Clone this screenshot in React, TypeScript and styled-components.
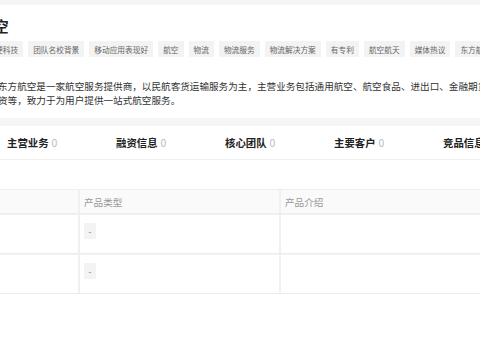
import styled, { createGlobalStyle } from "styled-components";

const GlobalStyle = createGlobalStyle`
  html, body {
    margin: 0;
    padding: 0;
    overflow: hidden;
    background: #f5f5f5;
    font-family: "Noto Sans CJK SC", "Noto Sans", sans-serif;
  }
`;

// the page is scrolled a little to the right, so the content begins off-screen
const Page = styled.div`
  margin-left: -50px;
  width: 760px;
  padding-top: 5px;
  display: flex;
  flex-direction: column;
  gap: 8px;
`;

const Card = styled.div`
  background: #fff;
  display: flex;
  flex-direction: column;
`;

const InfoCard = styled(Card)`
  padding: 11px 0 11px;
`;

const Title = styled.h1`
  margin: 0;
  padding-left: 1px;
  font-size: 14.4px;
  line-height: 20px;
  font-weight: bold;
  color: #222;
`;

const TagRow = styled.div`
  display: flex;
  gap: 5px;
  margin-top: 5px;
  padding-left: 2px;
  white-space: nowrap;
`;

const Tag = styled.span`
  display: inline-flex;
  align-items: center;
  height: 16px;
  padding: 0 5px;
  background: #f3f3f3;
  color: #666;
  font-size: 7.7px;
  border-radius: 1px;
`;

const Description = styled.p`
  margin: 22px 0 0;
  font-size: 9.6px;
  line-height: 14px;
  color: #333;
  white-space: nowrap;
`;

const TabBar = styled.div`
  display: grid;
  grid-template-columns: repeat(5, 109px);
  align-items: center;
  height: 33px;
  padding-left: 57px;
  border-bottom: 1px solid #f0f0f0;
`;

const Tab = styled.div`
  font-size: 10.4px;
  font-weight: bold;
  color: #222;
  white-space: nowrap;
`;

const Count = styled.span`
  margin-left: 3px;
  font-weight: normal;
  color: #bbb;
`;

const Table = styled.div`
  margin-top: 29px;
  border-top: 1px solid #eeeeee;
`;

const Row = styled.div<{ $head?: boolean }>`
  display: grid;
  grid-template-columns: 128px 201px 1fr;
  height: ${(p) => (p.$head ? "23px" : "38px")};
  background: ${(p) => (p.$head ? "#fafafa" : "#fff")};
  border-bottom: 1px solid #ececec;
  & + & {
    border-top: ${(p) => (p.$head ? "none" : "1px solid #f3f3f3")};
  }
`;

const Cell = styled.div<{ $head?: boolean }>`
  padding: ${(p) => (p.$head ? "0 4px" : "8px 4px")};
  display: flex;
  align-items: ${(p) => (p.$head ? "center" : "flex-start")};
  font-size: 9.6px;
  color: #999;
  & + & {
    border-left: 2px solid #f0f0f0;
  }
`;

const Dash = styled.span`
  display: inline-flex;
  align-items: center;
  justify-content: center;
  width: 12px;
  height: 16px;
  background: #f3f3f3;
  color: #666;
  font-size: 8px;
`;

const Filler = styled.div`
  height: 80px;
`;

const tags = [
  "独角兽",
  "硬科技",
  "团队名校背景",
  "移动应用表现好",
  "航空",
  "物流",
  "物流服务",
  "物流解决方案",
  "有专利",
  "航空航天",
  "媒体热议",
  "东方航空",
];

const tabs = [
  { name: "主营业务", count: 0 },
  { name: "融资信息", count: 0 },
  { name: "核心团队", count: 0 },
  { name: "主要客户", count: 0 },
  { name: "竞品信息", count: 0 },
];

export default function App() {
  return (
    <>
      <GlobalStyle />
      <Page>
        <InfoCard>
          <Title>东方航空</Title>
          <TagRow>
            {tags.map((t) => (
              <Tag key={t}>{t}</Tag>
            ))}
          </TagRow>
          <Description>
            公司简介：东方航空是一家航空服务提供商，以民航客货运输服务为主，主营业务包括通用航空、航空食品、进出口、金融期货、航空地产、
            <br />
            旅游业、投资等，致力于为用户提供一站式航空服务。
          </Description>
        </InfoCard>
        <Card>
          <TabBar>
            {tabs.map((t) => (
              <Tab key={t.name}>
                {t.name}
                <Count>{t.count}</Count>
              </Tab>
            ))}
          </TabBar>
          <Table>
            <Row $head>
              <Cell $head>产品名称</Cell>
              <Cell $head>产品类型</Cell>
              <Cell $head>产品介绍</Cell>
            </Row>
            {[1, 2].map((i) => (
              <Row key={i}>
                <Cell />
                <Cell>
                  <Dash>-</Dash>
                </Cell>
                <Cell />
              </Row>
            ))}
          </Table>
          <Filler />
        </Card>
      </Page>
    </>
  );
}
